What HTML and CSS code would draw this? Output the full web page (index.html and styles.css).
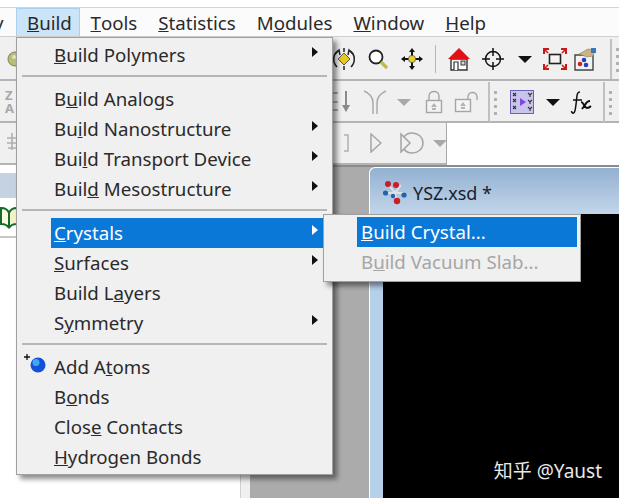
FILE: index.html
```html
<!DOCTYPE html>
<html lang="en">
<head>
  <meta charset="UTF-8">
  <meta name="viewport" content="width=device-width, initial-scale=1.0">
  <title>Build menu</title>
  <link rel="stylesheet" href="styles.css">
</head>
<body>
  <div class="app">
    <div class="titlebar"></div>
    <nav class="menubar">
      <span class="menubar-item clipped">y</span>
      <span class="menubar-item active"><u>B</u>uild</span>
      <span class="menubar-item"><u>T</u>ools</span>
      <span class="menubar-item"><u>S</u>tatistics</span>
      <span class="menubar-item">M<u>o</u>dules</span>
      <span class="menubar-item"><u>W</u>indow</span>
      <span class="menubar-item"><u>H</u>elp</span>
    </nav>

    <div class="toolbar row-one">
      <div class="stub">
        <svg class="stub-icon" width="14" height="18" viewBox="0 0 14 18"><ellipse cx="8" cy="9" rx="7" ry="7" fill="#b9bd7a" stroke="#7d8450"/><circle cx="7" cy="7" r="2" fill="#e2e4b8"/></svg>
      </div>
      <span class="tool"><svg width="24" height="24" viewBox="0 0 24 24" fill="none" stroke="#222" stroke-width="1.500"><path d="M6 4C1 7 0 15 5 20M18 4c5 3 6 11 1 16"/><path d="M3 7l4-4 1 5M21 7l-4-4-1 5M12 1v4M12 19v4"/><path d="M12 6l6 6-6 6-6-6z" fill="#e8c820" stroke="#555" stroke-width="1"/></svg></span>
      <span class="tool"><svg width="24" height="24" viewBox="0 0 24 24" fill="none"><circle cx="10" cy="10" r="6.500" fill="#fff" stroke="#222" stroke-width="1.800"/><path d="M15 15l6 6" stroke="#c4bd3c" stroke-width="3.400"/></svg></span>
      <span class="tool"><svg width="24" height="24" viewBox="0 0 24 24" fill="#111"><path d="M12 1l3 4h-2v4h-2V5H9zM12 23l-3-4h2v-4h2v4h2zM1 12l4-3v2h4v2H5v2zM23 12l-4 3v-2h-4v-2h4V9z"/><circle cx="12" cy="12" r="3.600" fill="#e8d020" stroke="#555" stroke-width=".8"/></svg></span>
      <span class="sep"></span>
      <span class="tool"><svg width="24" height="24" viewBox="0 0 24 24"><path d="M4 12h16v11H4z" fill="#fff" stroke="#333" stroke-width="1.400"/><path d="M1 12L12 1l11 11z" fill="#e3101a"/><path d="M7 23v-8h4v8" fill="#fff" stroke="#333" stroke-width="1.200"/><rect x="14" y="14" width="4" height="4" fill="#d8d8d8" stroke="#333"/></svg></span>
      <span class="tool"><svg width="24" height="24" viewBox="0 0 24 24" fill="none" stroke="#111" stroke-width="1.500"><circle cx="12" cy="12" r="7.500"/><path d="M12 1v8M12 15v8M1 12h8M15 12h8"/></svg></span>
      <span class="tool narrow"><span class="drop"></span></span>
      <span class="tool narrow"><svg width="24" height="24" viewBox="0 0 24 24" fill="none"><rect x="6.500" y="7.500" width="11" height="9" fill="#f4f4f4" stroke="#222" stroke-width="1.600"/><path d="M1 7V2h5M18 2h5v5M1 17v5h5M18 22h5v-5" stroke="#c81818" stroke-width="2"/><path d="M2 3l3 3M22 3l-3 3M2 21l3-3M22 21l-3-3" stroke="#c81818" stroke-width="1.500"/></svg></span>
      <span class="tool narrow"><svg width="24" height="24" viewBox="0 0 24 24"><path d="M2 8h18v15H2z" fill="#f2f2f2" stroke="#444" stroke-width="1.400"/><path d="M6 7l9-5 7 1-2 6-6 1z" fill="#c9b48a" stroke="#8a7a5a" stroke-width=".6"/><rect x="18" y="1" width="5" height="5" fill="#3a78b8"/><circle cx="7" cy="17" r="2.300" fill="#d02020"/><circle cx="13" cy="18" r="2.300" fill="#2040c0"/><circle cx="11" cy="13" r="2.300" fill="#2040c0"/></svg></span>
      <span class="sep tall end-sep"></span>
      <span class="grip"></span>
    </div>

    <div class="toolbar">
      <div class="stub"><span class="sort-stub">Z<br>A</span></div>
      <span class="tool slim"><svg width="28" height="28" viewBox="0 0 28 28" fill="none"><path d="M-2 5h7M-2 14h7M-2 22h7" stroke="#aaa" stroke-width="2"/><path d="M13 3v20" stroke="#8a8a8a" stroke-width="2"/><path d="M9 17l4 7 4-7z" fill="#8a8a8a"/></svg></span>
      <span class="tool slim"><svg width="24" height="28" viewBox="0 0 24 28" fill="none" stroke="#aaa" stroke-width="1.500"><path d="M1 3c5 2 9 6 9 12v11M14 26V15c0-6 4-10 9-12"/></svg></span>
      <span class="tool narrow"><span class="drop off"></span></span>
      <span class="tool narrow"><svg width="18" height="24" viewBox="0 0 18 24" fill="none" stroke="#a5a5a5" stroke-width="1.400"><path d="M4 10V6c0-6 10-6 10 0v4"/><rect x="1.500" y="10.500" width="15" height="12" fill="#f4f4f4"/><path d="M9 13l3 4H6zM7 18h4v2H7z" fill="#b4b4b4" stroke="none"/></svg></span>
      <span class="tool"><svg width="24" height="22" viewBox="0 0 24 22" fill="none" stroke="#a5a5a5" stroke-width="1.400"><path d="M14 9V6c0-6 9-6 9 0v3"/><rect x="1.500" y="8.500" width="15" height="12" fill="#f4f4f4"/><path d="M9 11l3 4H6zM7 16h4v2H7z" fill="#b4b4b4" stroke="none"/></svg></span>
      <span class="sep tall"></span>
      <span class="grip"></span>
      <span class="tool matrix-tool"><svg width="24" height="24" viewBox="0 0 24 24"><rect x=".5" y=".5" width="23" height="23" fill="#c8c4ee" stroke="#6a64b0"/><path d="M3 3l3 3m0-3L3 6M3 9l3 3m0-3l-3 3M3 16l3 3m0-3l-3 3M18 3l2 2 2-2m-2 2v2M18 10l2 2 2-2m-2 2v2M18 17l2 2 2-2m-2 2v2" fill="none" stroke="#333" stroke-width="1.100"/><path d="M10 8l6 4-6 4z" fill="#8048e0"/></svg></span>
      <span class="tool narrow"><span class="drop"></span></span>
      <span class="tool fx-tool"><svg width="24" height="26" viewBox="0 0 24 26" fill="none" stroke="#111"><path d="M11 3c-3 0-3 3-3.500 8s-1 10-2 12-3 1-3-1M4 11h9" stroke-width="1.500"/><path d="M12 13c3 0 3 6 6 6 2 0 3-1 4-2M21 12c-2 0-4 2-5 4l-3 4" stroke-width="2"/></svg></span>
      <span class="sep tall fx-sep"></span>
      <span class="grip"></span>
    </div>

    <div class="toolbar short">
      <div class="stub">
        <svg class="tree-stub" width="12" height="20" viewBox="0 0 12 20" fill="none" stroke="#b0b0b0" stroke-width="1.600"><path d="M6 0v17M1 5h10M1 10h10M2 15h9M11 5v12"/></svg>
      </div>
      <span class="tool slim"><svg width="6" height="20" viewBox="0 0 6 20" fill="none" stroke="#b0b0b0" stroke-width="1.500"><path d="M0 2h4v16H0"/></svg></span>
      <span class="tool"><svg class="play-icon" width="12" height="20" viewBox="0 0 12 20" fill="none" stroke="#a5a5a5" stroke-width="1.500"><path d="M1 1l10 9-10 9z"/></svg></span>
      <span class="tool"><svg width="24" height="22" viewBox="0 0 24 22" fill="none" stroke="#a5a5a5" stroke-width="1.500"><path d="M1 2l9 9-9 9z"/><path d="M4 5c2-3 5-4 8-4 6 0 11 4 11 10s-5 10-11 10c-3 0-6-1-8-4"/></svg></span>
      <span class="tool tiny"><span class="drop off"></span></span>
    </div>

    <div class="workspace">
      <aside class="side">
        <div class="side-band"></div>
        <div class="side-row">
          <svg width="18" height="26" viewBox="0 0 18 26" fill="none"><path d="M1 2c4 0 7 2 8 5v15c-1-2-4-4-8-4z" fill="#fafae0" stroke="#146a2c" stroke-width="2"/><path d="M9 7c1-3 4-5 8-5v16c-4 0-7 2-8 4z" fill="#f4f0c8" stroke="#146a2c" stroke-width="2"/></svg>
        </div>
      </aside>
      <div class="splitter"></div>
      <main class="mdi">
        <div class="doc">
          <header class="doc-title">
            <svg width="24" height="24" viewBox="0 0 24 24"><path d="M6 4l6 8 6-8M3 12h18M12 12l2 9" stroke="#e0e0e0" stroke-width="2" fill="none"/><circle cx="5" cy="3" r="3" fill="#c81e28"/><circle cx="13" cy="4" r="3" fill="#c81e28"/><circle cx="2.500" cy="12" r="2.600" fill="#2860b0"/><circle cx="21" cy="14" r="2.600" fill="#2860b0"/><circle cx="14" cy="20" r="3.200" fill="#c81e28"/><circle cx="10" cy="15" r="2.200" fill="#2860b0"/></svg>
            <span>YSZ.xsd *</span>
          </header>
          <div class="doc-body">
            <div class="watermark">知乎 @Yaust</div>
          </div>
        </div>
      </main>
    </div>
  </div>

  <div class="menu main-menu">
    <div class="item"><span><u>B</u>uild Polymers</span><i class="arrow"></i></div>
    <div class="menu-sep"></div>
    <div class="item"><span>B<u>u</u>ild Analogs</span></div>
    <div class="item"><span>Bu<u>i</u>ld Nanostructure</span><i class="arrow"></i></div>
    <div class="item"><span>Bui<u>l</u>d Transport Device</span><i class="arrow"></i></div>
    <div class="item"><span>Buil<u>d</u> Mesostructure</span><i class="arrow"></i></div>
    <div class="menu-sep"></div>
    <div class="item selected"><span><u>C</u>rystals</span><i class="arrow"></i></div>
    <div class="item"><span><u>S</u>urfaces</span><i class="arrow"></i></div>
    <div class="item"><span>Build L<u>a</u>yers</span></div>
    <div class="item"><span>S<u>y</u>mmetry</span><i class="arrow"></i></div>
    <div class="menu-sep"></div>
    <div class="item">
      <svg class="item-icon" width="24" height="24" viewBox="0 0 24 24"><path d="M-1 4h6M2 1v6" stroke="#111" stroke-width="1.300"/><circle cx="13" cy="12" r="7.500" fill="#1450d8"/><circle cx="11" cy="9.500" r="3.500" fill="#3ea8f0"/></svg>
      <span>Add A<u>t</u>oms</span>
    </div>
    <div class="item"><span>B<u>o</u>nds</span></div>
    <div class="item"><span>Clos<u>e</u> Contacts</span></div>
    <div class="item"><span><u>H</u>ydrogen Bonds</span></div>
  </div>

  <div class="menu sub-menu">
    <div class="item selected"><span><u>B</u>uild Crystal...</span></div>
    <div class="item disabled"><span>B<u>u</u>ild Vacuum Slab...</span></div>
  </div>
</body>
</html>
```

FILE: styles.css
```css
body {
  margin: 0;
  width: 619px;
  height: 498px;
  overflow: hidden;
  position: relative;
  font-family: 'Noto Sans', 'Open Sans', sans-serif;
  font-size: 18.7px;
  color: #2a2a2a;
  background-color: #ffffff;
}

.app {
  display: flex;
  flex-direction: column;
  height: 498px;
}

.titlebar {
  height: 8px;
  background-color: #ffffff;
  border-bottom: 1px solid #d4d4d4;
  box-sizing: border-box;
}

/* Menu bar */
.menubar {
  display: flex;
  height: 29px;
  align-items: center;
  background-color: #fbfbfb;
  border-bottom: 1px solid #d0d0d0;
  box-sizing: border-box;
}

.menubar-item {
  height: 100%;
  display: flex;
  align-items: center;
  padding: 0 10.5px;
  white-space: pre;
}

.menubar-item.clipped {
  width: 16px;
  padding: 0;
  box-sizing: border-box;
  text-indent: -6px;
  overflow: hidden;
}

.menubar-item.active {
  background-color: #cce4f7;
  border: 1px solid #a8d0f0;
  border-bottom: none;
  box-sizing: border-box;
  width: 64px;
  padding: 0 10px;
}

/* Toolbars */
.toolbar {
  display: flex;
  align-items: center;
  height: 42px;
  padding-top: 2px;
  background-color: #f0f0f0;
  border-bottom: 2px solid #b4b4b4;
  box-sizing: border-box;
  flex: none;
}

.toolbar.row-one {
  height: 44px;
}

.toolbar.short {
  width: 447px;
  padding-top: 0;
  border-right: 1px solid #a8a8a8;
}

.stub {
  width: 333px;
  flex: none;
  display: flex;
  align-items: center;
  padding-left: 5px;
  box-sizing: border-box;
}

.row-one .stub {
  width: 327px;
}

.stub-icon {
  margin-left: 2px;
}

.sort-stub {
  font-size: 13px;
  font-weight: bold;
  line-height: 13px;
  color: #a8a8a8;
}

.tree-stub {
  margin-left: 1px;
}

.tool {
  width: 34px;
  flex: none;
  display: flex;
  justify-content: center;
  align-items: center;
}

.tool.narrow {
  width: 30px;
}

.tool.slim {
  width: 28px;
}

.tool.tiny {
  width: 22px;
}

.tool.matrix-tool {
  width: 32px;
}

.tool.fx-tool {
  width: 26px;
}

.play-icon {
  margin-left: -4px;
}

.sep {
  width: 1px;
  height: 28px;
  margin: 0 6px;
  background-color: #b8b8b8;
  flex: none;
}

.sep.tall {
  width: 2px;
  height: 40px;
  margin: 0 0 0 5px;
  background-color: #c0c0c0;
}

.sep.tall.fx-sep {
  margin-left: 9px;
}

.sep.tall.end-sep {
  margin-left: 10px;
}

.grip {
  width: 3px;
  height: 26px;
  margin: 0 9px 0 4px;
  flex: none;
  background-image: radial-gradient(circle, #b0b0b0 1.4px, transparent 1.6px);
  background-size: 3px 7px;
}

.drop {
  display: block;
  width: 0;
  height: 0;
  border-left: 7px solid transparent;
  border-right: 7px solid transparent;
  border-top: 7px solid #111111;
}

.drop.off {
  border-top-color: #a8a8a8;
}

/* Lower area */
.workspace {
  flex: 1;
  display: flex;
  min-height: 0;
}

.side {
  width: 240px;
  flex: none;
  padding-top: 8px;
  background-color: #ffffff;
}

.side-band {
  height: 25px;
  background-color: #c4d2e2;
}

.side-row {
  height: 40px;
  padding-top: 8px;
  box-sizing: border-box;
  border-bottom: 2px solid #c8c8c8;
}

.splitter {
  width: 10px;
  flex: none;
  background-color: #f0f0f0;
  border-left: 1px solid #d0d0d0;
  box-sizing: border-box;
}

.mdi {
  flex: 1;
  padding-left: 119px;
  background-color: #ababab;
  border-top: 2px solid #8c8c8c;
  box-sizing: border-box;
}

.doc {
  height: 100%;
  display: flex;
  flex-direction: column;
  border-radius: 6px 0 0 0;
  border-top: 1px solid #ffffff;
  border-left: 1px solid #ffffff;
  box-sizing: border-box;
  background-color: #b6d0ea;
}

.doc-title {
  height: 46px;
  flex: none;
  display: flex;
  align-items: center;
  gap: 6px;
  padding: 4px 0 0 13px;
  box-sizing: border-box;
  background: linear-gradient(#93b1d2, #c2d6ea);
  color: #17222e;
  font-size: 18px;
  border-radius: 6px 0 0 0;
}

.doc-body {
  flex: 1;
  margin-left: 13px;
  background-color: #000000;
  display: flex;
  justify-content: flex-end;
  align-items: flex-end;
}

.watermark {
  margin: 0 17px 14px 0;
  font-family: 'Noto Sans', 'Noto Sans CJK SC', sans-serif;
  font-size: 19px;
  color: #e8e8e8;
}

/* Popup menus */
.menu {
  position: absolute;
  background-color: #f0f0f0;
  border: 1px solid #a0a0a0;
  box-sizing: border-box;
  box-shadow: 4px 4px 5px rgba(0, 0, 0, 0.45);
}

.main-menu {
  left: 16px;
  top: 37px;
  width: 317px;
  padding: 2px 0;
}

.sub-menu {
  left: 323px;
  top: 214px;
  width: 258px;
  padding: 2px 0 4px;
}

.item {
  position: relative;
  display: flex;
  align-items: center;
  justify-content: space-between;
  height: 30px;
  margin: 0 9px 0 34px;
  padding: 0 5px 2px 3px;
  box-sizing: border-box;
  white-space: nowrap;
}

.sub-menu .item {
  margin: 0 3px 0 33px;
  padding-left: 4px;
}

.item.selected {
  background-color: #0a78d7;
  color: #ffffff;
}

.item.disabled {
  color: #a6a6a6;
}

.item-icon {
  position: absolute;
  left: -26px;
  top: 1px;
  overflow: visible;
}

.arrow {
  width: 0;
  height: 0;
  margin-top: -4px;
  border-top: 5px solid transparent;
  border-bottom: 5px solid transparent;
  border-left: 6px solid #111111;
}

.selected .arrow {
  border-left-color: #ffffff;
}

.menu-sep {
  height: 2px;
  margin: 5px 5px 7px;
  background-color: #b6b6b6;
}
```
